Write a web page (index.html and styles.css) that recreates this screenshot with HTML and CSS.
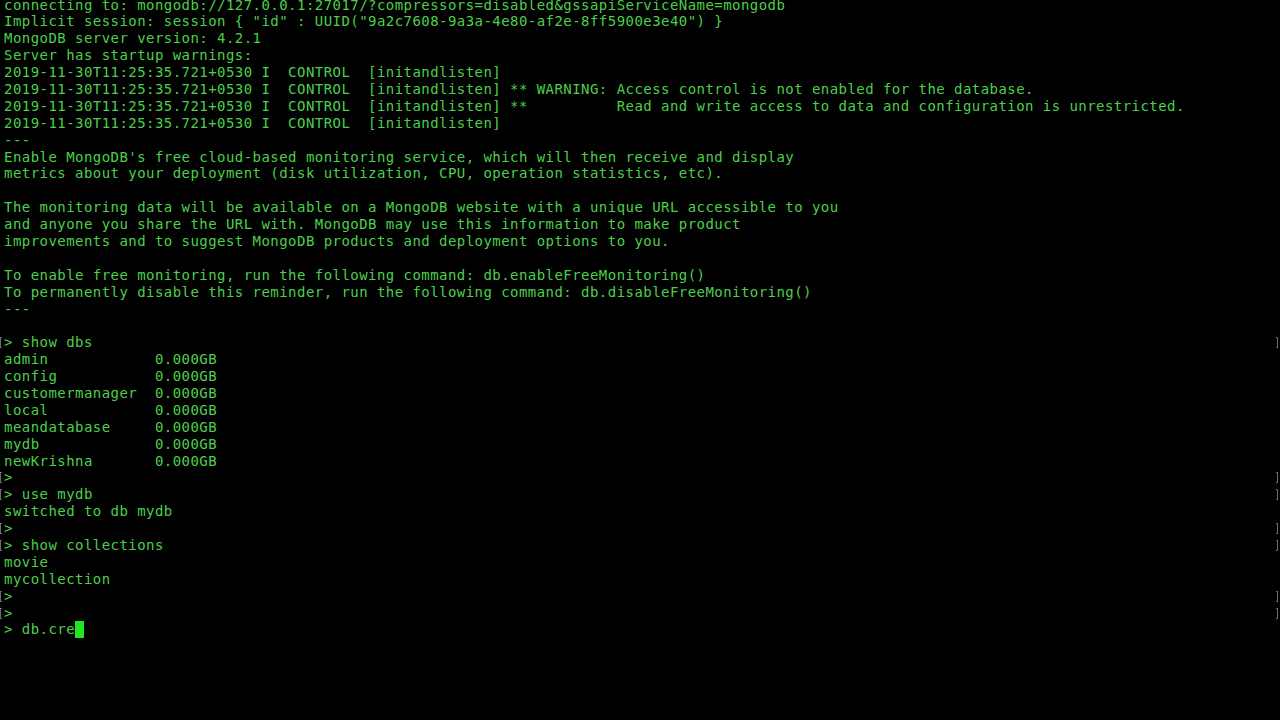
FILE: index.html
```html
<!DOCTYPE html>
<html lang="en">
<head>
<meta charset="utf-8">
<title>mongo shell</title>
<link rel="stylesheet" href="styles.css">
</head>
<body>
<main class="term">
<div class="ln"><span class="txt">connecting to: mongodb://127.0.0.1:27017/?compressors=disabled&amp;gssapiServiceName=mongodb</span></div>
<div class="ln"><span class="txt">Implicit session: session { "id" : UUID("9a2c7608-9a3a-4e80-af2e-8ff5900e3e40") }</span></div>
<div class="ln"><span class="txt">MongoDB server version: 4.2.1</span></div>
<div class="ln"><span class="txt">Server has startup warnings:</span></div>
<div class="ln"><span class="txt">2019-11-30T11:25:35.721+0530 I  CONTROL  [initandlisten]</span></div>
<div class="ln"><span class="txt">2019-11-30T11:25:35.721+0530 I  CONTROL  [initandlisten] ** WARNING: Access control is not enabled for the database.</span></div>
<div class="ln"><span class="txt">2019-11-30T11:25:35.721+0530 I  CONTROL  [initandlisten] **          Read and write access to data and configuration is unrestricted.</span></div>
<div class="ln"><span class="txt">2019-11-30T11:25:35.721+0530 I  CONTROL  [initandlisten]</span></div>
<div class="ln"><span class="txt">---</span></div>
<div class="ln"><span class="txt">Enable MongoDB's free cloud-based monitoring service, which will then receive and display</span></div>
<div class="ln"><span class="txt">metrics about your deployment (disk utilization, CPU, operation statistics, etc).</span></div>
<div class="ln"><span class="txt"> </span></div>
<div class="ln"><span class="txt">The monitoring data will be available on a MongoDB website with a unique URL accessible to you</span></div>
<div class="ln"><span class="txt">and anyone you share the URL with. MongoDB may use this information to make product</span></div>
<div class="ln"><span class="txt">improvements and to suggest MongoDB products and deployment options to you.</span></div>
<div class="ln"><span class="txt"> </span></div>
<div class="ln"><span class="txt">To enable free monitoring, run the following command: db.enableFreeMonitoring()</span></div>
<div class="ln"><span class="txt">To permanently disable this reminder, run the following command: db.disableFreeMonitoring()</span></div>
<div class="ln"><span class="txt">---</span></div>
<div class="ln"><span class="txt"> </span></div>
<div class="ln marked"><span class="txt">&gt; show dbs</span></div>
<div class="ln"><span class="txt">admin            0.000GB</span></div>
<div class="ln"><span class="txt">config           0.000GB</span></div>
<div class="ln"><span class="txt">customermanager  0.000GB</span></div>
<div class="ln"><span class="txt">local            0.000GB</span></div>
<div class="ln"><span class="txt">meandatabase     0.000GB</span></div>
<div class="ln"><span class="txt">mydb             0.000GB</span></div>
<div class="ln"><span class="txt">newKrishna       0.000GB</span></div>
<div class="ln marked"><span class="txt">&gt;</span></div>
<div class="ln marked"><span class="txt">&gt; use mydb</span></div>
<div class="ln"><span class="txt">switched to db mydb</span></div>
<div class="ln marked"><span class="txt">&gt;</span></div>
<div class="ln marked"><span class="txt">&gt; show collections</span></div>
<div class="ln"><span class="txt">movie</span></div>
<div class="ln"><span class="txt">mycollection</span></div>
<div class="ln marked"><span class="txt">&gt;</span></div>
<div class="ln marked"><span class="txt">&gt;</span></div>
<div class="ln"><span class="txt">&gt; db.cre<span class="cursor"> </span></span></div>
</main>
</body>
</html>
```
FILE: styles.css
```css
html, body {
  margin: 0;
  padding: 0;
  background: #000;
  height: 100%;
  overflow: hidden;
}

.term {
  margin-top: -3.5px;
  font-family: "DejaVu Sans Mono", "Liberation Mono", monospace;
  font-size: 14px;
  letter-spacing: 0.45px;
  line-height: 16.9px;
  color: #4ccf4c;
}

.ln {
  position: relative;
  display: flex;
  height: 16.9px;
  padding-left: 4px;
}

.txt {
  white-space: pre;
}

.marked::before {
  content: "";
  position: absolute;
  left: 0;
  top: 3px;
  width: 2px;
  height: 11px;
  border: 1px solid #6e6e6e;
  border-right: none;
  box-sizing: border-box;
}

.marked::after {
  content: "";
  position: absolute;
  right: 2px;
  top: 3px;
  width: 2px;
  height: 11px;
  border: 1px solid #6e6e6e;
  border-left: none;
  box-sizing: border-box;
}

.cursor {
  display: inline-block;
  background: #1fe81f;
  height: 16.9px;
  vertical-align: top;
}
```
